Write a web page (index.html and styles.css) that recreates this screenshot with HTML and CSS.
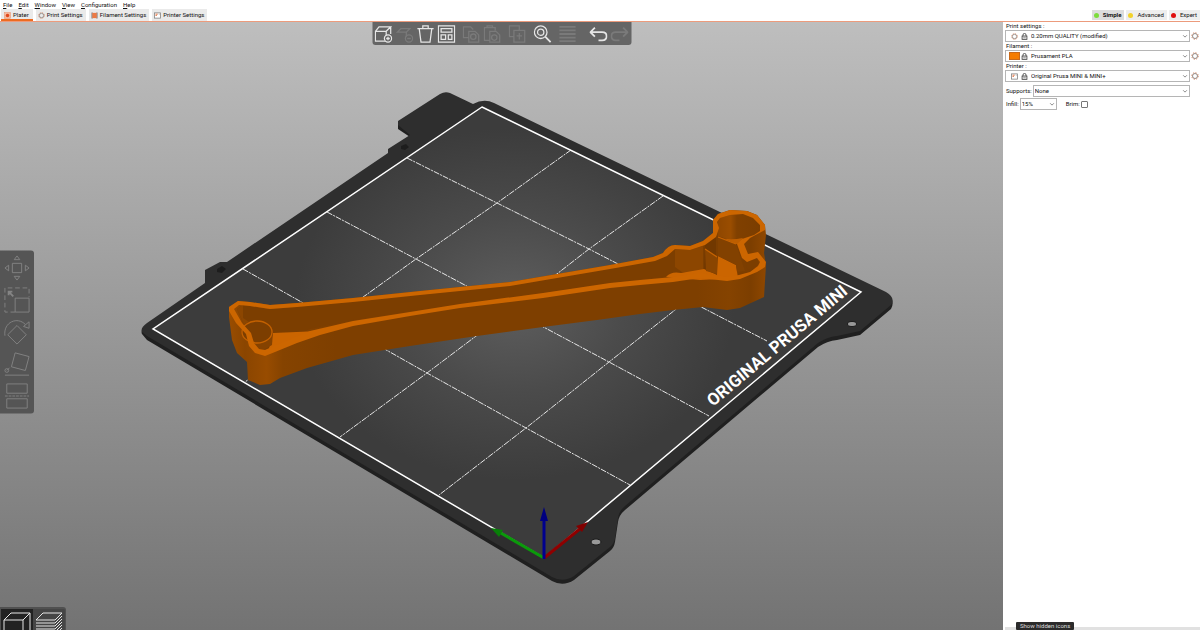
FILE: index.html
```html
<!DOCTYPE html>
<html lang="en">
<head>
  <meta charset="UTF-8">
  <meta name="viewport" content="width=device-width, initial-scale=1.0">
  <title>PrusaSlicer</title>
  <link rel="stylesheet" href="styles.css">
</head>
<body>
  <!-- shared icons -->
  <svg class="sprite" width="0" height="0" aria-hidden="true">
    <symbol id="gear" viewBox="0 0 16 16">
      <circle cx="8" cy="8" r="5" fill="none" stroke="#808080" stroke-width="1.8"/>
      <circle cx="8" cy="8" r="6.6" fill="none" stroke="#d98a68" stroke-width="2" stroke-dasharray="2.6 2.58"/>
    </symbol>
    <symbol id="lock" viewBox="0 0 16 16">
      <path d="M4.500 7V4.500a3.500 3.500 0 0 1 7 0V7" fill="none" stroke="#444" stroke-width="2"/>
      <rect x="2.500" y="7" width="11" height="7.500" fill="none" stroke="#444" stroke-width="2"/>
      <path d="M5 11h6" stroke="#555" stroke-width="1.600"/>
    </symbol>
    <symbol id="printer" viewBox="0 0 16 16">
      <rect x="1" y="2" width="14" height="12" fill="#fff" stroke="#808080" stroke-width="1.800"/>
      <path d="M3.500 5h5M3.500 8h3" stroke="#e0632e" stroke-width="2"/>
      <path d="M11 5h2" stroke="#808080" stroke-width="1.500"/>
    </symbol>
    <symbol id="chevron" viewBox="0 0 8 8">
      <path d="M1.500 3l2.500 2.500L6.500 3" fill="none" stroke="#666" stroke-width="1"/>
    </symbol>
  </svg>

  <div class="app">
    <nav class="menubar">
      <button class="menu-item"><u>F</u>ile</button>
      <button class="menu-item"><u>E</u>dit</button>
      <button class="menu-item"><u>W</u>indow</button>
      <button class="menu-item"><u>V</u>iew</button>
      <button class="menu-item"><u>C</u>onfiguration</button>
      <button class="menu-item"><u>H</u>elp</button>
    </nav>

    <div class="tabbar">
      <div class="tabs">
        <button class="tab tab-active">
          <svg class="icon" viewBox="0 0 16 16"><rect x="1" y="1" width="14" height="14" fill="#f6b79d" stroke="#e58a63"/><circle cx="8" cy="8" r="4" fill="#e0481c"/></svg>
          Plater
        </button>
        <button class="tab">
          <svg class="icon"><use href="#gear"/></svg>
          Print Settings
        </button>
        <button class="tab">
          <svg class="icon" viewBox="0 0 16 16"><path d="M1 1h3v14H1zM12 1h3v14h-3z" fill="#808080"/><rect x="3" y="2" width="10" height="12" fill="#ed7a45"/></svg>
          Filament Settings
        </button>
        <button class="tab">
          <svg class="icon"><use href="#printer"/></svg>
          Printer Settings
        </button>
      </div>
      <div class="modes">
        <button class="mode mode-active"><span class="dot dot-simple"></span>Simple</button>
        <button class="mode"><span class="dot dot-advanced"></span>Advanced</button>
        <button class="mode"><span class="dot dot-expert"></span>Expert</button>
      </div>
    </div>

    <div class="workspace">
      <main class="viewport">
        <svg class="scene" viewBox="0 22 1003 608" preserveAspectRatio="xMidYMid slice">
          <defs>
            <radialGradient id="glow" gradientUnits="userSpaceOnUse" cx="515" cy="305" r="220" gradientTransform="translate(0 60) scale(1 .8)">
              <stop offset="0" stop-color="#5e5e5e"/>
              <stop offset=".5" stop-color="#4b4b4b"/>
              <stop offset="1" stop-color="#3c3c3c"/>
            </radialGradient>
            <linearGradient id="wall" gradientUnits="userSpaceOnUse" x1="229" y1="0" x2="767" y2="0">
              <stop offset="0" stop-color="#9a4d00"/>
              <stop offset=".03" stop-color="#8a4500"/>
              <stop offset=".07" stop-color="#984c00"/>
              <stop offset=".1" stop-color="#854300"/>
              <stop offset=".2" stop-color="#7e3f00"/>
              <stop offset=".87" stop-color="#7e3f00"/>
              <stop offset=".93" stop-color="#854300"/>
              <stop offset=".97" stop-color="#7c3e00"/>
              <stop offset="1" stop-color="#904800"/>
            </linearGradient>
            <linearGradient id="ring" x1="0" y1="0" x2="1" y2="0">
              <stop offset="0" stop-color="#8f4700"/>
              <stop offset=".3" stop-color="#9a4d00"/>
              <stop offset=".45" stop-color="#804000"/>
              <stop offset="1" stop-color="#7a3d00"/>
            </linearGradient>
          </defs>

          <!-- heatbed: thickness, then surface -->
          <path transform="translate(0 2)" fill="#202020" d="M142 332Q140 328 147 323L205 285V272L220 262H227L388 153V149L410 135L398 127V121L440 94Q445 91 450 93L473 104Q484 98 494 103L886 292Q896 298 891 307L860 333L837 338Q827 339 818 345L625 508Q619 513 618 520L615 540Q614 546 610 549L574 578Q563 585 552 579L147 338Z"/>
          <path fill="#2e2e2e" d="M142 332Q140 328 147 323L205 283V270L220 262H227L388 153V149L410 135L398 125V121L440 94Q445 91 450 93L473 104Q484 98 494 103L886 292Q896 298 891 305L860 331L837 336Q827 337 818 343L625 506Q619 511 618 518L615 538Q614 544 610 547L574 576Q563 583 552 577L147 336Z"/>
          <path d="M482 107L861 292L544 558L153 329Z" fill="url(#glow)"/>
          <g fill="#1d1d1d">
            <path d="M401 146l5-2 3 3-4 3-4-1zM217 269l5-3 4 3-4 4-5-1z"/>
          </g>
          <g fill="#999" stroke="#1c1c1c">
            <ellipse cx="852" cy="324" rx="4.500" ry="2.500"/>
            <ellipse cx="596" cy="542" rx="5" ry="3"/>
          </g>

          <g class="grid-lines">
            <path d="M571 150L497 203L416 259L245 382M663 196L589 249L508 312L427 373L340 437M760 243L609 362L526 428L439 495"/>
            <path d="M407 158L497 203L589 249L767 341M327 212L416 259L609 362L709 416M243 269L427 373L526 428L630 485"/>
          </g>
          <path d="M482 107L861 292L544 558L153 329Z" fill="none" stroke="#fff" stroke-width="1.500"/>
          <text class="bed-label" transform="translate(713 407) rotate(-40)">ORIGINAL PRUSA MINI</text>

          <!-- axes -->
          <g stroke-width="3">
            <path d="M544 558L499 532" stroke="#0a9a0a"/>
            <path d="M544 558L581 528" stroke="#8f0000"/>
            <path d="M544 559V518" stroke="#00008f"/>
          </g>
          <path d="M491 528L503 530L499 537Z" fill="#087f08"/>
          <path d="M588 522L582 532L576 526Z" fill="#800000"/>
          <path d="M544 507L548 521H540Z" fill="#000080"/>

          <!-- bone cutter -->
          <path fill="url(#wall)" d="M229 307L238 301L250 302L270 305L297 303L353 298L420 291L510 282L610 265L653 257L663 253Q668 245 675 245L690 246L703 241L713 233L713 220L718 214L730 210L747 211L757 215L765 225L766 235L764 253L766 265L764 297L740 308L727 310L703 307L673 310L640 314L597 320L543 327L477 336L410 346L353 355L307 368L280 378L270 384L260 385L248 380L247 362L237 353L232 340L229 317Z"/>
          <path fill="#7c3e00" d="M237 309L243 305L270 309L297 307L353 302L420 295L510 286L610 269L655 261L667 256L675 249L690 250L705 244L716 236L744 240L742 257L759 262L750 272L727 277L700 273L640 279L543 293L410 311L353 320L310 329L265 350L252 343Z"/>
          <path fill="#8c4600" d="M237 309L243 305V318L249 322L245 327ZM675 249L690 250L703 246V272H682L675 267Z"/>
          <path fill="#713800" d="M705 244L716 236V273H704Z"/>
          <!-- inner floor -->
          <path fill="#cb6500" d="M273 333L320 331L300 339L268 352ZM666 277Q671 271 681 273L704 269L717 275L718 256L736 265L738 278L700 280Z"/>
          <!-- round socket -->
          <path fill="#854200" d="M241 332A16 12 0 0 1 273 332L272 345L262 351L253 345Z"/>
          <ellipse cx="257" cy="332" rx="15" ry="11" fill="#7c3e00" stroke="#c36100" stroke-width="1.300"/>
          <!-- upper ring -->
          <path fill="url(#ring)" d="M718 222L720 218L730 215L743 214L753 218L760 225L760 232L755 236L743 240H730L718 236Z"/>
          <path fill="#bd5e00" d="M718 237Q728 241 743 238L738 244L730 244Z"/>
          <path fill="#824100" d="M718 236L736 244L745 271L737 272L736 265L718 256Z"/>
          <path fill="#8a4500" d="M705 249L717 256V274L706 271Z"/>
          <path d="M718 237L736 244M705 249L717 257" fill="none" stroke="#c66300" stroke-width="1.200"/>
          <path fill="#7c3e00" d="M747 261L757 257L759 264L751 271L746 268Z"/>
          <!-- rim -->
          <path fill="#cc6600" fill-rule="evenodd" d="M229 307L238 301L250 302L270 305L297 303L353 298L420 291L510 282L610 265L653 257L663 253Q668 245 675 245L690 246L703 241L713 233L713 220L718 214L730 210L747 211L757 215L765 225L765 230L750 238L744 244L748 254L758 252L766 262L765 267L757 272L740 279L727 281L700 278L673 282L640 285L610 288L543 298L460 308L410 316L353 326L320 335L297 343L275 352L265 356L255 353L249 346L246 334L236 323L229 311Z
            M234 309L239 305L250 306L270 309L297 307L353 302L420 295L510 286L610 269L655 261L667 256L675 249L690 250L705 245L716 237L719 228L717 222L720 218L730 215L743 214L753 218L760 225L760 231L754 235L742 239L737 244L742 258L747 262L757 258L760 262L758 266L750 272L739 275L727 277L700 273L673 277L640 280L610 283L543 293L460 304L410 312L353 321L310 331L272 347L265 350L259 349L254 343L251 333L242 323Z"/>
        </svg>

        <div class="toolbar">
          <button class="tool" aria-label="Add"><svg viewBox="0 0 20 20"><path d="M1 7h12v11H1zM1 7l4-5h13l-5 5M18 2v8"/><circle class="solid" cx="15" cy="15" r="4"/><path d="M15 13v4M13 15h4"/></svg></button>
          <button class="tool tool-off" aria-label="Delete"><svg viewBox="0 0 20 20"><path d="M2 8l4-4h10l-4 4zM12 8v5"/><circle cx="15" cy="15" r="4"/><path d="M13 15h4"/></svg></button>
          <button class="tool" aria-label="Delete all"><svg viewBox="0 0 20 20"><path d="M1 4h18M7 4V1h6v3M3 4l2 15h10l2-15"/></svg></button>
          <button class="tool" aria-label="Arrange"><svg viewBox="0 0 20 20"><path d="M1 1h18v18H1zM4 4h12v4H4zM4 11h5v5H4zM12 11h4v5h-4z"/></svg></button>
          <span class="tool-gap"></span>
          <button class="tool tool-off" aria-label="Copy"><svg viewBox="0 0 20 20"><path d="M7 14H1V2h8l3 3M7 7h7l4 4v8H7z"/><circle cx="12" cy="13" r="3"/></svg></button>
          <button class="tool tool-off" aria-label="Paste"><svg viewBox="0 0 20 20"><path d="M7 17H1V3h12v3M4 3V1h6v2M7 7h7l4 4v8H7z"/><circle cx="12" cy="14" r="3"/></svg></button>
          <span class="tool-gap"></span>
          <button class="tool tool-off" aria-label="Instances"><svg viewBox="0 0 20 20"><path d="M6 13H1V1h11v5M6 6h12v13H6zM12 9v7M9 12h6"/></svg></button>
          <span class="tool-gap"></span>
          <button class="tool" aria-label="Search"><svg viewBox="0 0 20 20"><circle cx="8" cy="8" r="7"/><circle cx="8" cy="8" r="3.500"/><path class="bold" d="M13 13l6 6"/></svg></button>
          <span class="tool-gap"></span>
          <button class="tool tool-off" aria-label="Layer height"><svg viewBox="0 0 20 20"><path class="bold" d="M1 2h18M1 6h18M1 10h18M1 14h18M1 18h18"/></svg></button>
          <span class="tool-gap tool-gap-wide"></span>
          <button class="tool" aria-label="Undo"><svg viewBox="0 0 20 20"><path class="bold" d="M6 3L1 8l5 5M1 8h13q5 0 5 4.500T14 17h-4"/></svg></button>
          <button class="tool tool-off" aria-label="Redo"><svg viewBox="0 0 20 20"><path class="bold" d="M14 3l5 5-5 5M19 8H6q-5 0-5 4.500T6 17h4"/></svg></button>
        </div>

        <div class="gizmos">
          <button class="gizmo" aria-label="Move"><svg viewBox="0 0 28 28"><path d="M9 9h10v10H9zM14 1l3 4h-6zM14 27l3-4h-6zM1 14l4-3v6zM27 14l-4-3v6z"/></svg></button>
          <button class="gizmo" aria-label="Scale"><svg viewBox="0 0 28 28"><path stroke-dasharray="5 3" d="M12 27H1V1h26v10"/><path d="M12 12h15v15H12z"/><path d="M10 10L5 5M5 9V5h4" stroke-width="2"/></svg></button>
          <button class="gizmo" aria-label="Rotate"><svg viewBox="0 0 28 28"><path d="M14 7l10 10-10 10L4 17zM1 18C-1 3 15-3 23 6M21 8l6-5v7z"/></svg></button>
          <button class="gizmo" aria-label="Place on face"><svg viewBox="0 0 28 28"><path d="M12 2l15 4-4 15-15-4zM1 26h26M6 18l-3 3"/><circle cx="3" cy="21" r="2"/></svg></button>
          <button class="gizmo" aria-label="Cut"><svg viewBox="0 0 28 28"><path d="M3 1h22v10H3zM3 17h22v10H3z"/><path stroke-dasharray="3 1" d="M1 14h26"/></svg></button>
        </div>

        <div class="views">
          <button class="view view-active" aria-label="3D editor view"><svg viewBox="0 0 28 28"><path d="M1 9h19v19H1zM1 9l7-7h19l-7 7M27 2v19l-7 7"/></svg></button>
          <button class="view" aria-label="Preview"><svg viewBox="0 0 28 28"><path d="M1 9l7-7h19l-7 7zM1 12h19l7-7M1 15h19l7-7M1 18h19l7-7M1 21h19l7-7M1 24h19l7-7M1 27h19l7-7"/></svg></button>
        </div>
      </main>

      <aside class="sidebar">
        <div class="preset">
          <label class="preset-label" for="print">Print settings :</label>
          <div class="preset-row">
            <div class="combo">
              <svg class="icon"><use href="#gear"/></svg>
              <svg class="icon"><use href="#lock"/></svg>
              <select id="print"><option>0.20mm QUALITY (modified)</option></select>
              <svg class="chevron"><use href="#chevron"/></svg>
            </div>
            <button class="edit" aria-label="Edit print settings"><svg class="icon"><use href="#gear"/></svg></button>
          </div>
        </div>
        <div class="preset">
          <label class="preset-label" for="filament">Filament :</label>
          <div class="preset-row">
            <div class="combo combo-filament">
              <span class="swatch"></span>
              <svg class="icon"><use href="#lock"/></svg>
              <select id="filament"><option>Prusament PLA</option></select>
              <svg class="chevron"><use href="#chevron"/></svg>
            </div>
            <button class="edit" aria-label="Edit filament"><svg class="icon"><use href="#gear"/></svg></button>
          </div>
        </div>
        <div class="preset">
          <label class="preset-label" for="printer-select">Printer :</label>
          <div class="preset-row">
            <div class="combo">
              <svg class="icon"><use href="#printer"/></svg>
              <svg class="icon"><use href="#lock"/></svg>
              <select id="printer-select"><option>Original Prusa MINI &amp; MINI+</option></select>
              <svg class="chevron"><use href="#chevron"/></svg>
            </div>
            <button class="edit" aria-label="Edit printer"><svg class="icon"><use href="#gear"/></svg></button>
          </div>
        </div>

        <div class="options">
          <div class="option-row">
            <label for="supports">Supports:</label>
            <div class="combo combo-plain">
              <select id="supports"><option>None</option></select>
              <svg class="chevron"><use href="#chevron"/></svg>
            </div>
          </div>
          <div class="option-row">
            <label for="infill">Infill:</label>
            <div class="combo combo-plain combo-infill">
              <select id="infill"><option>15%</option></select>
              <svg class="chevron"><use href="#chevron"/></svg>
            </div>
            <label class="brim-label" for="brim">Brim:</label>
            <input class="brim" id="brim" type="checkbox">
          </div>
        </div>

        <div class="sidebar-footer">
          <div class="tooltip">Show hidden icons</div>
        </div>
      </aside>
    </div>
  </div>
</body>
</html>
```
FILE: styles.css
```css
* {
  box-sizing: border-box;
}

body {
  margin: 0;
  background: #fff;
  color: #111;
  font-family: Roboto, "Open Sans", sans-serif;
  font-size: 6px;
  line-height: 8px;
  overflow: hidden;
}

button,
select,
input {
  margin: 0;
  padding: 0;
  border: 0;
  background: none;
  color: inherit;
  font: inherit;
}

.sprite {
  position: absolute;
}

.app {
  display: flex;
  flex-direction: column;
  height: 100vh;
}

.icon {
  width: 7px;
  height: 7px;
  flex: none;
}

/* menu and tabs */
.menubar {
  display: flex;
  gap: 6px;
  height: 9px;
  padding-left: 3px;
}

.tabbar {
  display: flex;
  justify-content: space-between;
  height: 13px;
  border-bottom: 1px solid #ec9b7c;
}

.tabs {
  display: flex;
  gap: 3px;
  padding-left: 1px;
}

.tab {
  display: flex;
  align-items: center;
  gap: 2px;
  padding: 0 3px 0 2px;
  background: #eaeaea;
}

.tab-active {
  padding: 0 4px 0 3px;
  box-shadow: inset 0 -2px #ed6b21;
}

.modes {
  display: flex;
  gap: 2px;
}

.mode {
  display: flex;
  align-items: center;
  gap: 4px;
  padding: 0 3px 0 2px;
  margin: 1px 0;
  background: #eee;
}

.mode-active {
  background: #ddd;
  font-weight: 700;
}

.dot {
  width: 5px;
  height: 5px;
  border-radius: 50%;
}

.dot-simple {
  background: #7ddc3c;
}

.dot-advanced {
  background: #f2d22b;
}

.dot-expert {
  background: #e01010;
}

/* 3D view */
.workspace {
  display: flex;
  flex: 1;
  min-height: 0;
}

.viewport {
  position: relative;
  flex: 1;
  min-width: 0;
  overflow: hidden;
  background: linear-gradient(#bebebe, #737373);
}

.scene {
  display: block;
  width: 100%;
  height: 100%;
}

.grid-lines {
  fill: none;
  stroke: #e6e6e6;
  stroke-width: 1;
  stroke-dasharray: 6 1 2 1;
}

.bed-label {
  fill: #fff;
  font-family: Roboto, "Liberation Sans", sans-serif;
  font-size: 17px;
  font-weight: 700;
}

.toolbar svg,
.gizmos svg,
.views svg {
  display: block;
  fill: none;
  stroke: currentColor;
}

.toolbar {
  position: absolute;
  top: 0;
  left: 50%;
  transform: translateX(-50%);
  display: flex;
  align-items: center;
  height: 23px;
  padding: 0 1px;
  background: #656565;
  border-radius: 0 0 3px 3px;
}

.tool {
  width: 21px;
  padding: 0 1px;
  color: #e6e6e6;
}

.tool svg {
  width: 18px;
  height: 18px;
  stroke-width: 1.4;
}

.tool .solid {
  fill: #656565;
}

.tool .bold {
  stroke-width: 2;
}

.tool-off {
  color: #7a7a7a;
}

.tool-gap {
  width: 4px;
}

.tool-gap-wide {
  width: 10px;
}

.gizmos {
  position: absolute;
  top: 51%;
  left: 0;
  transform: translateY(-50%);
  display: flex;
  flex-direction: column;
  gap: 5px;
  padding: 4px;
  background: #555;
  border-radius: 0 3px 3px 0;
}

.gizmo {
  color: #848484;
}

.gizmo svg {
  width: 26px;
  height: 27px;
}

.views {
  position: absolute;
  bottom: 0;
  left: 0;
  display: flex;
  height: 23px;
  overflow: hidden;
  background: #454545;
  border: solid #505050;
  border-width: 2px 1px 0;
  border-radius: 0 3px 0 0;
}

.view {
  height: 32px;
  padding: 2px;
  color: #e6e6e6;
}

.view-active {
  background: #222;
}

.view svg {
  width: 28px;
  height: 28px;
}

/* settings column */
.sidebar {
  display: flex;
  flex-direction: column;
  width: 197px;
}

.preset-label {
  display: block;
  padding-left: 3px;
}

.preset-row {
  display: flex;
  align-items: center;
  gap: 1px;
  padding: 0 1px 0 2px;
}

.combo {
  display: flex;
  align-items: center;
  flex: 1;
  gap: 3px;
  height: 12px;
  padding: 0 1px 0 5px;
  border: 1px solid #b5b5b5;
}

.combo-filament {
  padding-left: 3px;
}

.combo-filament .swatch {
  width: 11px;
  margin-right: -2px;
}

.combo select {
  flex: 1;
  min-width: 0;
  appearance: none;
  line-height: 8px;
}

.combo-plain {
  padding-left: 1px;
  gap: 0;
}

.swatch {
  height: 8px;
  background: #f57c00;
  border: 1px solid #c8691a;
}

.chevron {
  width: 6px;
  height: 6px;
  flex: none;
}

.edit .icon {
  display: block;
  width: 8px;
  height: 8px;
}

.options {
  display: flex;
  flex-direction: column;
  gap: 1px;
  padding: 3px 10px 0 3px;
}

.option-row {
  display: flex;
  align-items: center;
  gap: 1px;
}

.combo-infill {
  flex: none;
  width: 37px;
}

.brim-label {
  margin-left: 8px;
}

.brim {
  width: 7px;
  height: 7px;
  appearance: none;
  border: 1px solid #777;
  border-radius: 1px;
}

.sidebar-footer {
  position: relative;
  height: 3px;
  margin: auto 0 0 2px;
  background: #e1e1e1;
}

.tooltip {
  position: absolute;
  left: 11px;
  bottom: 0;
  padding: 0 4px;
  background: #2b2b2b;
  border-radius: 1px;
  color: #ddd;
  white-space: nowrap;
}
```
